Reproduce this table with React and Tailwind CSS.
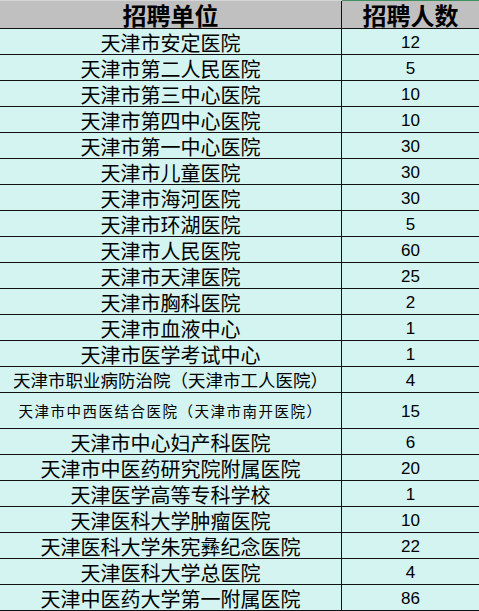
import React from "react";

const rows = [
  ["天津市安定医院", "12"],
  ["天津市第二人民医院", "5"],
  ["天津市第三中心医院", "10"],
  ["天津市第四中心医院", "10"],
  ["天津市第一中心医院", "30"],
  ["天津市儿童医院", "30"],
  ["天津市海河医院", "30"],
  ["天津市环湖医院", "5"],
  ["天津市人民医院", "60"],
  ["天津市天津医院", "25"],
  ["天津市胸科医院", "2"],
  ["天津市血液中心", "1"],
  ["天津市医学考试中心", "1"],
  ["天津市职业病防治院（天津市工人医院）", "4", "a"],
  ["天津市中西医结合医院（天津市南开医院）", "15", "b"],
  ["天津市中心妇产科医院", "6"],
  ["天津市中医药研究院附属医院", "20"],
  ["天津医学高等专科学校", "1"],
  ["天津医科大学肿瘤医院", "10"],
  ["天津医科大学朱宪彝纪念医院", "22"],
  ["天津医科大学总医院", "4"],
  ["天津中医药大学第一附属医院", "86"],
];

const cjk = { fontFamily: '"Noto Sans CJK SC", "Noto Sans", sans-serif' };
const num = { fontFamily: '"Liberation Sans", Arial, sans-serif' };

export default function App() {
  return (
    <div className="w-[479px] h-[611px] bg-[#d3f4f0] overflow-hidden text-black">
      <div className="flex h-[29px] bg-[#c0c0c0] border-b border-[#111] border-t border-t-[#d6d6d6]">
        <div
          className="w-[342px] border-r border-[#111] flex items-center justify-center text-[24px] font-bold leading-[26px]"
          style={cjk}
        >
          招聘单位
        </div>
        <div className="flex-1 relative flex items-center justify-center text-[24px] font-bold leading-[26px]" style={cjk}>
          <div className="absolute -top-px left-0 right-0 h-px bg-[#3f8f5f]" />
          招聘人数
        </div>
      </div>
      {rows.map(([name, n, kind]) => (
        <div
          key={name}
          className={
            "flex border-b border-[#111] " + (kind === "b" ? "h-[36px]" : "h-[26px]")
          }
        >
          <div
            className={
              "w-[342px] border-r border-[#111] flex items-center justify-center whitespace-nowrap " +
              (kind === "a"
                ? "text-[17.5px] leading-[20px] pt-[1px]"
                : kind === "b"
                ? "text-[14.5px] leading-[18px] tracking-[1.5px] pt-[1px]"
                : "text-[20px] leading-[22px] pt-[2px]")
            }
            style={cjk}
          >
            {name}
          </div>
          <div className="flex-1 flex items-center justify-center text-[17px] leading-[20px] pt-[2px]" style={num}>
            {n}
          </div>
        </div>
      ))}
    </div>
  );
}
